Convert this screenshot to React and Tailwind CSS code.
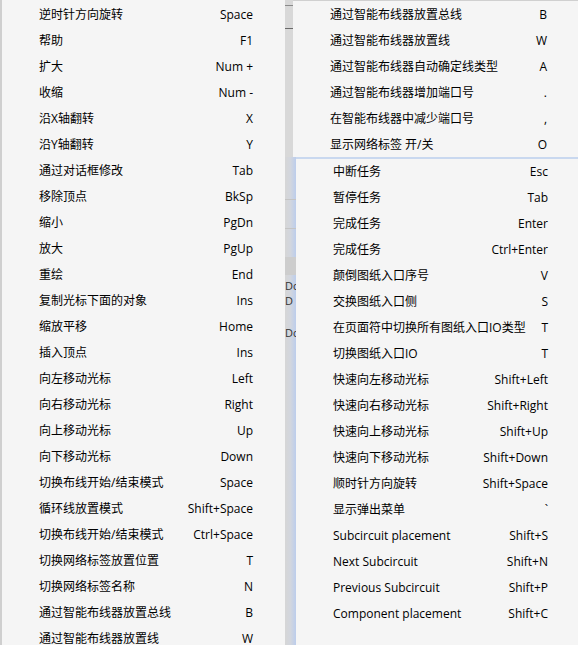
const leftItems = [
  ['逆时针方向旋转', 'Space'],
  ['帮助', 'F1'],
  ['扩大', 'Num +'],
  ['收缩', 'Num -'],
  ['沿X轴翻转', 'X'],
  ['沿Y轴翻转', 'Y'],
  ['通过对话框修改', 'Tab'],
  ['移除顶点', 'BkSp'],
  ['缩小', 'PgDn'],
  ['放大', 'PgUp'],
  ['重绘', 'End'],
  ['复制光标下面的对象', 'Ins'],
  ['缩放平移', 'Home'],
  ['插入顶点', 'Ins'],
  ['向左移动光标', 'Left'],
  ['向右移动光标', 'Right'],
  ['向上移动光标', 'Up'],
  ['向下移动光标', 'Down'],
  ['切换布线开始/结束模式', 'Space'],
  ['循环线放置模式', 'Shift+Space'],
  ['切换布线开始/结束模式', 'Ctrl+Space'],
  ['切换网络标签放置位置', 'T'],
  ['切换网络标签名称', 'N'],
  ['通过智能布线器放置总线', 'B'],
  ['通过智能布线器放置线', 'W'],
]

const topItems = [
  ['通过智能布线器放置总线', 'B'],
  ['通过智能布线器放置线', 'W'],
  ['通过智能布线器自动确定线类型', 'A'],
  ['通过智能布线器增加端口号', '.'],
  ['在智能布线器中减少端口号', ','],
  ['显示网络标签 开/关', 'O'],
]

const lowerItems = [
  ['中断任务', 'Esc'],
  ['暂停任务', 'Tab'],
  ['完成任务', 'Enter'],
  ['完成任务', 'Ctrl+Enter'],
  ['颠倒图纸入口序号', 'V'],
  ['交换图纸入口侧', 'S'],
  ['在页面符中切换所有图纸入口IO类型', 'T'],
  ['切换图纸入口IO', 'T'],
  ['快速向左移动光标', 'Shift+Left'],
  ['快速向右移动光标', 'Shift+Right'],
  ['快速向上移动光标', 'Shift+Up'],
  ['快速向下移动光标', 'Shift+Down'],
  ['顺时针方向旋转', 'Shift+Space'],
  ['显示弹出菜单', '`'],
  ['Subcircuit placement', 'Shift+S'],
  ['Next Subcircuit', 'Shift+N'],
  ['Previous Subcircuit', 'Shift+P'],
  ['Component placement', 'Shift+C'],
]

function Row({ label, keys, pr }) {
  return (
    <div className={`flex h-[26px] shrink-0 items-center justify-between pl-[37px] ${pr}`}>
      <span className="whitespace-nowrap">{label}</span>
      <span className="whitespace-nowrap">{keys}</span>
    </div>
  )
}

export default function App() {
  return (
    <div
      className="flex h-[645px] w-[578px] overflow-hidden bg-[#f5f5f5] text-[12px] leading-none text-black"
      style={{ fontFamily: '"Open Sans", "Noto Sans CJK SC", sans-serif' }}
    >
      {/* left menu */}
      <div className="flex w-[285px] shrink-0 flex-col border-l-2 border-l-[#cfcfcf] pt-[2px]">
        {leftItems.map(([l, k], i) => (
          <Row key={i} label={l} keys={k} pr="pr-[32px]" />
        ))}
      </div>

      {/* right side */}
      <div className="flex flex-1 flex-col">
        <div className="flex h-[157px] shrink-0">
          <div className="flex w-[8px] shrink-0 flex-col bg-[#d8d8d8]">
            <div className="mt-[5px] h-[1px] bg-[#8a8a8a]" />
            <div className="mt-[22px] h-[1px] bg-[#6a6a6a]" />
          </div>
          <div className="flex flex-1 flex-col overflow-hidden border-t border-t-[#d0d0d0] pt-[1px]">
            {topItems.map(([l, k], i) => (
              <Row key={i} label={l} keys={k} pr="pr-[31px]" />
            ))}
          </div>
        </div>

        <div className="flex flex-1">
          <div className="flex w-[11px] shrink-0 flex-col bg-gradient-to-r from-[#d6d6d6] via-[#d2d6de] to-[#bccdec]">
            <div className="mt-[42px] h-[1px] bg-[#c4c4c4]" />
            <div className="mt-[28px] h-[1px] bg-[#c4c4c4]" />
            <div className="mt-[28px] h-[18px] bg-[#cdcdcd]" />
            <div className="mt-[4px] overflow-hidden whitespace-nowrap text-[11px] leading-[14px] text-[#333]">Dc</div>
            <div className="mt-[1px] overflow-hidden whitespace-nowrap text-[11px] leading-[14px] text-[#333]">D</div>
            <div className="mt-[18px] overflow-hidden whitespace-nowrap text-[11px] leading-[14px] text-[#333]">Dc</div>
          </div>
          <div className="flex flex-1 flex-col border-t-2 border-t-[#c9d8ef]">
            {lowerItems.map(([l, k], i) => (
              <Row key={i} label={l} keys={k} pr="pr-[30px]" />
            ))}
          </div>
        </div>
      </div>
    </div>
  )
}
